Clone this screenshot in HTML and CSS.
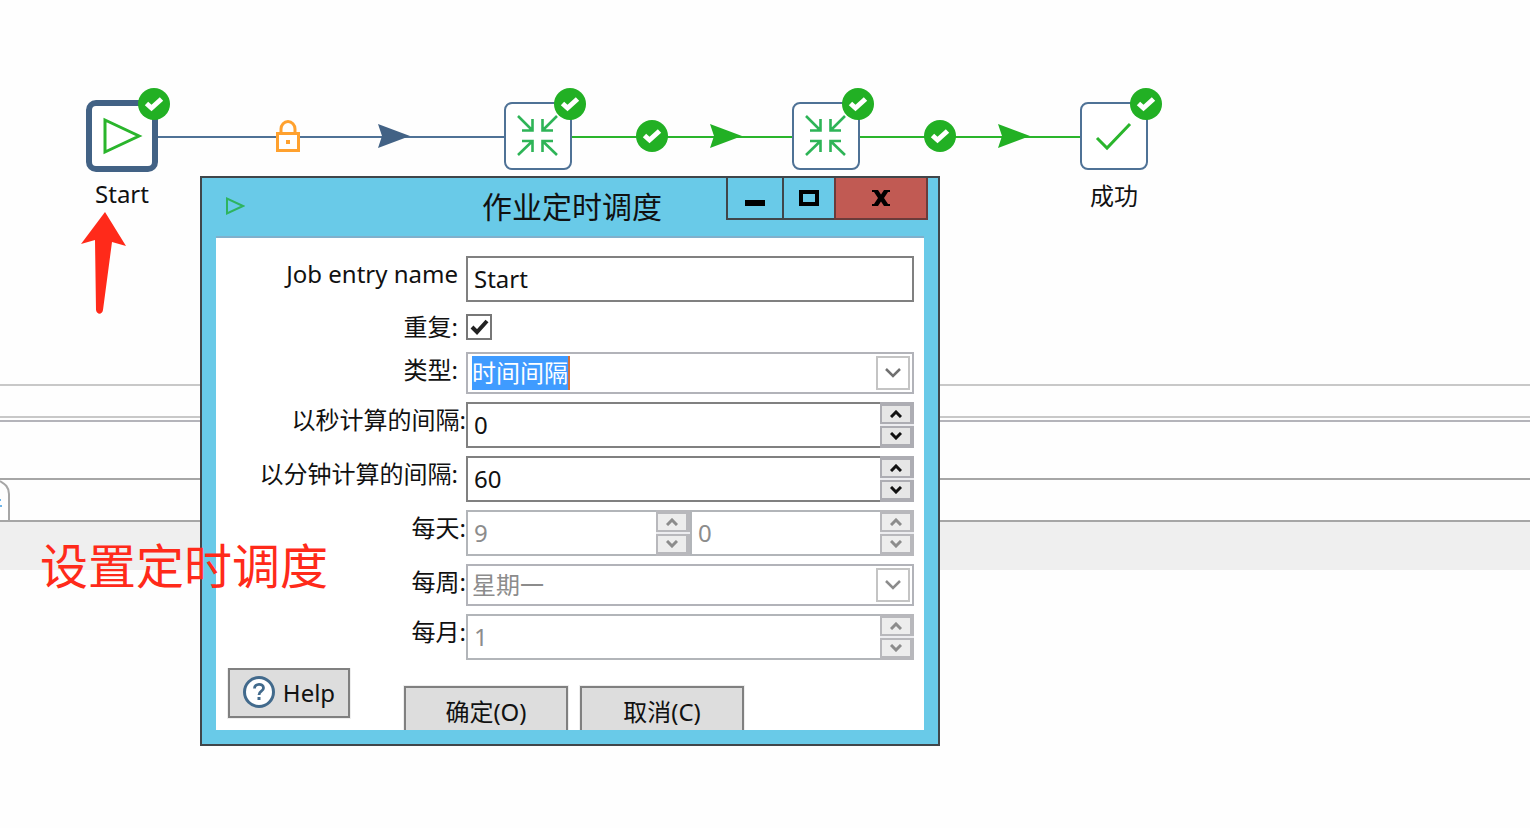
FILE: index.html
```
<!DOCTYPE html>
<html lang="zh-CN">
<head>
    <meta charset="UTF-8">
    <meta name="viewport" content="width=device-width, initial-scale=1.0">
    <title>作业定时调度</title>
    <link rel="stylesheet" href="styles.css">
</head>
<body>
    <svg class="symbols" width="0" height="0" aria-hidden="true">
        <symbol id="badge" viewBox="0 0 32 32">
            <circle cx="16" cy="16" r="16" fill="#22b024"/>
            <path d="M8.5 15.5 L13.5 20 L23.5 11" fill="none" stroke="#fff" stroke-width="5"/>
        </symbol>
        <symbol id="collapse" viewBox="0 0 68 68">
            <g fill="none" stroke="#2eb457" stroke-width="2.6">
                <path d="M14 14 L28.5 28.5 M28.5 17 V28.5 H18"/>
                <path d="M53 14 L38.500 28.500 M38.5 17 V28.5 H49"/>
                <path d="M14 53 L28.5 39 M18 39 H28.5 V50"/>
                <path d="M53 53 L38.5 39 M49 39 H38.5 V50"/>
            </g>
        </symbol>
        <symbol id="head" viewBox="0 0 32 24">
            <path d="M0 0 L32 12 L0 24 L4 12 Z" fill="currentColor"/>
        </symbol>
        <symbol id="up" viewBox="0 0 12 8">
            <path d="M1 7 L6 2 L11 7" fill="none" stroke="currentColor" stroke-width="3"/>
        </symbol>
        <symbol id="down" viewBox="0 0 12 8">
            <path d="M1 1 L6 6 L11 1" fill="none" stroke="currentColor" stroke-width="3"/>
        </symbol>
        <symbol id="chevron" viewBox="0 0 16 10">
            <path d="M1 1 L8 8 L15 1" fill="none" stroke="currentColor" stroke-width="2.5"/>
        </symbol>
    </svg>

    <main class="workspace">
        <section class="canvas">
            <svg class="hops" width="1160" height="180" viewBox="0 0 1160 180">
                <path d="M158 137 H504" stroke="#4f7296" stroke-width="2"/>
                <path d="M572 137 H792 M860 137 H1080" stroke="#2ab52c" stroke-width="2"/>
                <g fill="#fff" stroke="#ffa12e" stroke-width="3">
                    <path d="M281 133 V129 A7 7.5 0 0 1 295 129 V133" fill="none"/>
                    <rect x="277.5" y="133.5" width="21" height="17"/>
                    <rect x="286" y="140" width="4" height="4" fill="#ffa12e" stroke="none"/>
                </g>
                <use href="#head" x="378" y="124" width="32" height="24" color="#426285"/>
                <use href="#head" x="710" y="124" width="32" height="24" color="#22b024"/>
                <use href="#head" x="998" y="124" width="32" height="24" color="#22b024"/>
                <use href="#badge" x="636" y="120" width="32" height="32"/>
                <use href="#badge" x="924" y="120" width="32" height="32"/>
            </svg>

            <div class="node node-start">
                <svg viewBox="0 0 68 68"><path d="M17 18 V50 L51 34 Z" fill="none" stroke="#2ab52c" stroke-width="3"/></svg>
                <svg class="badge"><use href="#badge"/></svg>
                <span class="node-name">Start</span>
            </div>
            <div class="node node-job-1">
                <svg><use href="#collapse"/></svg>
                <svg class="badge"><use href="#badge"/></svg>
            </div>
            <div class="node node-job-2">
                <svg><use href="#collapse"/></svg>
                <svg class="badge"><use href="#badge"/></svg>
            </div>
            <div class="node node-success">
                <svg viewBox="0 0 68 68"><path d="M17 36 L27 46 L50 22" fill="none" stroke="#2ab52c" stroke-width="3"/></svg>
                <svg class="badge"><use href="#badge"/></svg>
                <span class="node-name">成功</span>
            </div>
        </section>

        <section class="panel">
            <div class="panel-head"></div>
            <div class="panel-tools"></div>
            <div class="panel-tabs">
                <svg width="12" height="42" viewBox="0 0 12 42">
                    <path d="M0 1 C5 4 9 7 9 14 V42" fill="none" stroke="#a6a6a6" stroke-width="2"/>
                    <path d="M0 20 H1 M0 26 H2" stroke="#6fb4e8" stroke-width="2"/>
                </svg>
            </div>
            <div class="panel-body"></div>
        </section>

        <section class="dialog">
            <header class="title-bar">
                <svg class="title-icon" width="20" height="20" viewBox="0 0 20 20"><path d="M2 2.5 V17.5 L18 10 Z" fill="none" stroke="#2eb45f" stroke-width="2"/></svg>
                <h1>作业定时调度</h1>
                <div class="window-buttons">
                    <button type="button" class="minimize" aria-label="Minimize"><svg width="20" height="16"><path d="M0 13 H20" stroke="#000" stroke-width="6"/></svg></button>
                    <button type="button" class="maximize" aria-label="Maximize"><svg width="20" height="16"><rect x="2" y="2" width="16" height="12" fill="none" stroke="#000" stroke-width="4"/></svg></button>
                    <button type="button" class="close" aria-label="Close"><svg width="20" height="16"><path d="M1 0 H7 L10 4.5 L13 0 H19 V2 H17 L13 8 L17 14 H19 V16 H13 L10 11.5 L7 16 H1 V14 H3 L7 8 L3 2 H1 Z"/></svg></button>
                </div>
            </header>

            <form class="client">
                <div class="row">
                    <label for="name">Job entry name</label>
                    <input type="text" id="name" class="text-box" value="Start">
                </div>
                <div class="row row-check">
                    <label for="repeat">重复:</label>
                    <span class="check">
                        <input type="checkbox" id="repeat" checked>
                        <svg width="26" height="26" viewBox="0 0 26 26"><path d="M6 13 L11 18 L21 7" fill="none" stroke="#222" stroke-width="4"/></svg>
                    </span>
                </div>
                <div class="row">
                    <label for="type">类型:</label>
                    <span class="combo">
                        <select id="type" class="selected"><option>时间间隔</option></select>
                        <span class="combo-arrow"><svg width="16" height="10"><use href="#chevron"/></svg></span>
                    </span>
                </div>
                <div class="row">
                    <label for="seconds" class="tight">以秒计算的间隔:</label>
                    <span class="spinner">
                        <input type="number" id="seconds" value="0">
                        <button type="button" aria-label="Up"><svg width="12" height="8"><use href="#up"/></svg></button>
                        <button type="button" aria-label="Down"><svg width="12" height="8"><use href="#down"/></svg></button>
                    </span>
                </div>
                <div class="row">
                    <label for="minutes">以分钟计算的间隔:</label>
                    <span class="spinner">
                        <input type="number" id="minutes" value="60">
                        <button type="button" aria-label="Up"><svg width="12" height="8"><use href="#up"/></svg></button>
                        <button type="button" aria-label="Down"><svg width="12" height="8"><use href="#down"/></svg></button>
                    </span>
                </div>
                <div class="row">
                    <label for="hour" class="tight">每天:</label>
                    <div class="time">
                        <span class="spinner">
                            <input type="number" id="hour" value="9" disabled>
                            <button type="button" aria-label="Up" disabled><svg width="12" height="8"><use href="#up"/></svg></button>
                            <button type="button" aria-label="Down" disabled><svg width="12" height="8"><use href="#down"/></svg></button>
                        </span>
                        <span class="spinner">
                            <input type="number" id="minute" value="0" aria-label="每天" disabled>
                            <button type="button" aria-label="Up" disabled><svg width="12" height="8"><use href="#up"/></svg></button>
                            <button type="button" aria-label="Down" disabled><svg width="12" height="8"><use href="#down"/></svg></button>
                        </span>
                    </div>
                </div>
                <div class="row">
                    <label for="weekday" class="tight">每周:</label>
                    <span class="combo">
                        <select id="weekday" disabled><option>星期一</option></select>
                        <span class="combo-arrow"><svg width="16" height="10"><use href="#chevron"/></svg></span>
                    </span>
                </div>
                <div class="row">
                    <label for="day" class="tight">每月:</label>
                    <span class="spinner">
                        <input type="number" id="day" value="1" disabled>
                        <button type="button" aria-label="Up" disabled><svg width="12" height="8"><use href="#up"/></svg></button>
                        <button type="button" aria-label="Down" disabled><svg width="12" height="8"><use href="#down"/></svg></button>
                    </span>
                </div>

                <div class="actions">
                    <button type="button" class="help">
                        <svg width="32" height="32" viewBox="0 0 32 32">
                            <circle cx="16" cy="16" r="14.5" fill="#fff" stroke="#426a8c" stroke-width="3"/>
                            <path d="M11.5 12.5 C11.5 7 20.5 7 20.5 12 C20.5 15.5 16 15 16 19" fill="none" stroke="#426a8c" stroke-width="2.8"/>
                            <rect x="14.5" y="21" width="3" height="3" fill="#426a8c"/>
                        </svg>
                        Help
                    </button>
                    <div class="confirm">
                        <button type="submit">确定(O)</button>
                        <button type="button">取消(C)</button>
                    </div>
                </div>
            </form>
        </section>

        <svg class="note-arrow" width="46" height="104" viewBox="0 0 46 104">
            <path d="M25 1 L46 35 L32 31 L23 99 C22 104 17 104 16 99 L15 29 L1 33 Z" fill="#ff2a1a"/>
        </svg>
        <p class="note">设置定时调度</p>
    </main>
</body>
</html>
```
FILE: styles.css
```
* {
    box-sizing: border-box;
}

body {
    margin: 0;
    background-color: #fefefe;
    color: #111;
    font-family: "Noto Sans", "Noto Sans CJK SC", sans-serif;
    font-size: 24px;
}

input,
select,
button {
    margin: 0;
    border-radius: 0;
    font: inherit;
    color: inherit;
}

svg {
    display: block;
    flex: none;
}

.symbols {
    position: absolute;
}

.workspace {
    position: relative;
    min-height: 100vh;
    overflow: hidden;
}

/* job canvas */
.canvas {
    position: relative;
    height: 384px;
}

.hops {
    position: absolute;
    left: 0;
    top: 0;
}

.node {
    position: absolute;
    top: 102px;
    width: 68px;
    height: 68px;
    border: 2px solid #4f7296;
    border-radius: 8px;
    background-color: #fff;
}

.node > svg:first-child {
    width: 68px;
    height: 68px;
    margin: -2px;
}

.node-start {
    left: 86px;
    top: 100px;
    width: 72px;
    height: 72px;
    border: 6px solid #426285;
    border-radius: 10px;
}

.node-start > svg:first-child {
    margin: -4px;
}

.node-job-1 {
    left: 504px;
}

.node-job-2 {
    left: 792px;
}

.node-success {
    left: 1080px;
}

.badge {
    position: absolute;
    right: -16px;
    top: -16px;
    width: 32px;
    height: 32px;
}

.node-start .badge {
    right: -18px;
    top: -18px;
}

.node-name {
    position: absolute;
    top: 100%;
    left: 50%;
    margin-top: 12px;
    line-height: 32px;
    white-space: nowrap;
    transform: translateX(-50%);
}

/* results panel under the canvas */
.panel-head {
    height: 34px;
    border-top: 2px solid #c8c8c8;
    border-bottom: 2px solid #c8c8c8;
}

.panel-tools {
    height: 60px;
    margin-top: 2px;
    border-top: 2px solid #b4b4ba;
}

.panel-tools,
.panel-tabs {
    border-bottom: 2px solid #a6a6a6;
}

.panel-tabs {
    height: 42px;
}

.panel-body {
    height: 48px;
    background-color: #efefef;
}

/* dialog */
.dialog {
    position: absolute;
    left: 200px;
    top: 176px;
    width: 740px;
    padding: 0 14px 14px;
    border: 2px solid #40464a;
    background-color: #69cae8;
}

.title-bar {
    display: grid;
    grid-template-columns: 1fr auto 1fr;
    height: 58px;
    margin-right: -4px;
}

.title-icon {
    margin: 18px 0 0 9px;
}

.title-bar h1 {
    margin: 0;
    font-size: 30px;
    font-weight: normal;
    line-height: 58px;
}

.window-buttons {
    display: flex;
    justify-self: end;
    height: 42px;
}

.window-buttons button {
    display: flex;
    align-items: center;
    justify-content: center;
    padding: 0;
    border: 2px solid #40464a;
    border-width: 0 0 2px 2px;
    background: none;
}

.window-buttons .minimize {
    width: 56px;
}

.window-buttons .maximize {
    width: 52px;
}

.window-buttons .close {
    width: 94px;
    border-color: #6b3b3a;
    border-right-width: 2px;
    background-color: #c15a53;
}

.client {
    display: flex;
    flex-direction: column;
    gap: 8px;
    padding-top: 18px;
    border-top: 2px solid #80b0cc;
    background-color: #fff;
}

.row {
    display: grid;
    grid-template-columns: 250px 1fr;
    align-items: start;
    padding-right: 10px;
}

.row label {
    padding-right: 8px;
    line-height: 35px;
    text-align: right;
    white-space: nowrap;
}

.row label.tight {
    padding-right: 0;
}

.row-check {
    margin: 4px 0;
}

.row-check label {
    line-height: 26px;
}

.text-box,
.spinner input {
    width: 100%;
    height: 46px;
    padding: 0 6px 2px;
    border: 2px solid #808080;
    background-color: #fff;
    outline: none;
}

.check {
    display: grid;
    width: 26px;
    height: 26px;
}

.check > * {
    grid-area: 1 / 1;
}

.check input {
    appearance: none;
    border: 2px solid #777;
    background-color: #fff;
}

.check svg {
    display: none;
    pointer-events: none;
}

.check input:checked + svg {
    display: block;
}

.combo {
    display: grid;
    align-items: center;
}

.combo > * {
    grid-area: 1 / 1;
}

.combo select {
    appearance: none;
    width: 100%;
    height: 42px;
    padding: 0 4px 2px;
    border: 2px solid #b2b3b9;
    background-color: #fff;
    opacity: 1;
}

/* selected text with the caret behind it */
.combo select.selected {
    background-image: linear-gradient(to right, #3f9bff 96px, #d0703c 96px);
    background-position: 4px 2px;
    background-repeat: no-repeat;
    background-size: 98px 34px;
    color: #fff;
}

.combo-arrow {
    display: flex;
    align-items: center;
    justify-content: center;
    justify-self: end;
    width: 34px;
    height: 34px;
    margin-right: 4px;
    border: 2px solid #c4c4c4;
    color: #707070;
    pointer-events: none;
}

.spinner {
    display: grid;
    grid-template-columns: 1fr 34px;
    grid-template-rows: 22px 22px;
    row-gap: 2px;
    background-color: #ededf0;
}

.spinner input {
    grid-row: 1 / 3;
    min-width: 0;
    border-right: none;
    appearance: textfield;
}

.spinner input::-webkit-inner-spin-button {
    appearance: none;
    margin: 0;
}

.spinner button {
    display: flex;
    align-items: center;
    justify-content: center;
    padding: 0;
    border: 2px solid #adadb3;
    border-width: 4px 4px 2px 2px;
    background-color: #e6e6e6;
}

.spinner button:last-child {
    border-width: 2px 4px 4px 2px;
}

.spinner input:disabled {
    border-color: #b2b5b9;
}

.spinner button:disabled {
    border-color: #b8b8bc;
    background-color: #ededed;
}

:disabled,
:disabled + .combo-arrow {
    color: #8c8c8c;
}

.time {
    display: grid;
    grid-template-columns: 1fr 1fr;
}

/* the confirm buttons run below the window edge */
.actions {
    display: flex;
    align-items: flex-start;
    gap: 54px;
    height: 62px;
    padding-left: 12px;
    overflow: hidden;
}

.actions button {
    height: 50px;
    padding: 0 0 2px;
    border: 2px solid #808080;
    background-color: #ddd;
    box-shadow: 0 0 0 1px #eee;
}

.actions .help {
    display: flex;
    align-items: center;
    justify-content: center;
    gap: 8px;
    width: 122px;
}

.confirm {
    display: flex;
    gap: 12px;
    padding-top: 18px;
}

.confirm button {
    width: 164px;
}

/* annotations */
.note-arrow {
    position: absolute;
    left: 80px;
    top: 211px;
}

.note {
    position: absolute;
    left: 40px;
    top: 530px;
    margin: 0;
    color: #ff2a1a;
    font-size: 48px;
    line-height: 72px;
}
```
